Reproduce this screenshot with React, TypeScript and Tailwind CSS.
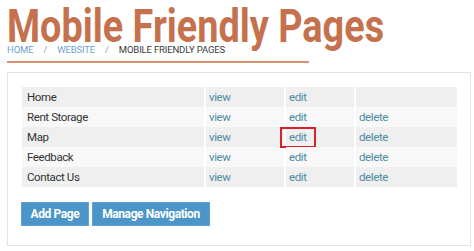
import React from "react";

type PageRow = {
  name: string;
  canDelete: boolean;
};

const rows: PageRow[] = [
  { name: "Home", canDelete: false },
  { name: "Rent Storage", canDelete: true },
  { name: "Map", canDelete: true },
  { name: "Feedback", canDelete: true },
  { name: "Contact Us", canDelete: true },
];

const linkCls = "text-[#4f8ca1] text-[11.5px] tracking-[-0.4px] pl-[3px] leading-[20px]";

const App: React.FC = () => {
  return (
    <div
      className="min-h-screen bg-white pl-[7px]"
      style={{ fontFamily: "Roboto, 'Liberation Sans', sans-serif" }}
    >
      <h1 className="mt-[-2px] mb-[-10px] w-max text-[47px] leading-[55px] font-bold text-[#c6714d] whitespace-nowrap scale-x-[0.805] origin-left">
        Mobile Friendly Pages
      </h1>

      <div className="w-[302px] border-b-2 border-[#d9916f] pt-[1px] pb-[5px]">
        <nav className="flex items-center text-[9.5px] leading-[12px] tracking-[-0.15px] uppercase">
          <span className="text-[#6ea3d1]">Home</span>
          <span className="text-[#9a9a9a] mx-[10px]">/</span>
          <span className="text-[#6ea3d1]">Website</span>
          <span className="text-[#9a9a9a] mx-[10px]">/</span>
          <span className="text-[#3a3a3a]">Mobile Friendly Pages</span>
        </nav>
      </div>

      <div className="mt-[9px] w-[464px] border border-[#e3e3e3] pt-[14px] pl-[14px] pb-[19px]">
        <div className="flex flex-col">
          {rows.map((row, i) => {
            const bg = i % 2 === 0 ? "bg-[#efefef]" : "bg-[#f8f8f8]";
            return (
              <div
                key={row.name}
                className="grid grid-cols-[182px_78px_68px_101px] gap-x-[2px] h-[20px]"
              >
                <div className={`${bg} pl-[5px] text-[11.5px] tracking-[-0.4px] leading-[20px] text-[#333333]`}>
                  {row.name}
                </div>
                <div className={`${bg} ${linkCls}`}>view</div>
                <div className={`${bg} ${linkCls} relative`}>
                  edit
                  {row.name === "Map" && (
                    <span className="absolute left-[-6px] top-0 w-[36px] h-[21px] border-2 border-[#d8222a]" />
                  )}
                </div>
                <div className={`${bg} ${linkCls}`}>{row.canDelete ? "delete" : ""}</div>
              </div>
            );
          })}
        </div>

        <div className="mt-[15px] ml-[-1px] flex gap-[3px]">
          <button className="w-[68px] h-[24px] bg-[#4c95c8] border border-[#5ea2d2] text-white font-bold text-[12px] tracking-[-0.4px] leading-[22px]">
            Add Page
          </button>
          <button className="w-[118px] h-[24px] bg-[#4c95c8] border border-[#5ea2d2] text-white font-bold text-[12px] tracking-[-0.4px] leading-[22px]">
            Manage Navigation
          </button>
        </div>
      </div>
    </div>
  );
};

export default App;
